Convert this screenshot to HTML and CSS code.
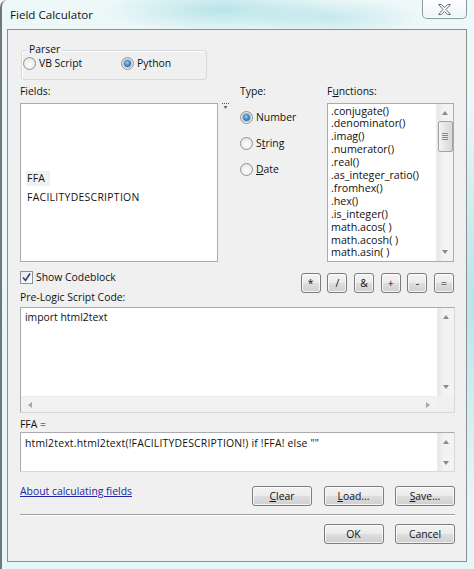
FILE: index.html
```html
<!DOCTYPE html>
<html>
<head>
<meta charset="utf-8">
<title>Field Calculator</title>
<link rel="stylesheet" href="styles.css">
</head>
<body>
<div class="window">
  <div class="titlebar">
    <div class="title">Field Calculator</div>
    <div class="close-btn">
      <svg width="13" height="11" viewBox="0 0 13 11"><path d="M0.5 0.5h3l3 3 3-3h3l-4.5 5 4.5 5h-3l-3-3-3 3h-3l4.5-5z" fill="#f6f6f6" stroke="#6f7577" stroke-width="1"/></svg>
    </div>
  </div>
  <div class="panel">
    <div class="group">
      <span class="group-label">Parser</span>
      <div class="radio radio-vb"><span class="rb"></span>VB Script</div>
      <div class="radio"><span class="rb checked"></span>Python</div>
    </div>

    <div class="columns">
      <div class="col">
        <div class="lbl">Fields:</div>
        <div class="listbox fields-list">
          <div class="field-item sel">FFA</div>
          <div class="field-item">FACILITYDESCRIPTION</div>
        </div>
      </div>
      <div class="sort-col">
        <svg width="7" height="7" viewBox="0 0 7 7"><path d="M0 0.5h1M2 0.5h1M4 0.5h1M6 0.5h1" stroke="#555" stroke-width="1"/><path d="M1.5 3h4l-2 3z" fill="#666"/></svg>
      </div>
      <div class="col">
        <div class="lbl">Type:</div>
        <div class="type-radios">
          <div class="radio"><span class="rb checked"></span>Number</div>
          <div class="radio"><span class="rb"></span>S<u>t</u>ring</div>
          <div class="radio"><span class="rb"></span><u>D</u>ate</div>
        </div>
      </div>
      <div class="col">
        <div class="lbl">F<u>u</u>nctions:</div>
        <div class="listbox func-list">
          <div class="func-items">
            <div>.conjugate()</div>
            <div>.denominator()</div>
            <div>.imag()</div>
            <div>.numerator()</div>
            <div>.real()</div>
            <div>.as_integer_ratio()</div>
            <div>.fromhex()</div>
            <div>.hex()</div>
            <div>.is_integer()</div>
            <div>math.acos( )</div>
            <div>math.acosh( )</div>
            <div>math.asin( )</div>
            <div class="partial">math.asinh( )</div>
          </div>
          <div class="vscroll">
            <span class="arrow up"></span>
            <span class="thumb"><span class="grip"></span></span>
            <span class="track-fill"></span>
            <span class="arrow down"></span>
          </div>
        </div>
      </div>
    </div>

    <div class="code-row">
      <div class="code-left">
        <div class="check">
          <span class="cb"><svg width="11" height="11" viewBox="0 0 11 11"><path d="M2 5.5l2.5 3 4.5-7" fill="none" stroke="#27408b" stroke-width="1.6"/></svg></span>
          Show Codeblock
        </div>
        <div class="lbl">Pre-Logic Script Code:</div>
      </div>
      <div class="ops">
        <div class="btn op">*</div>
        <div class="btn op">/</div>
        <div class="btn op">&amp;</div>
        <div class="btn op">+</div>
        <div class="btn op">-</div>
        <div class="btn op">=</div>
      </div>
    </div>

    <div class="textbox code-box">
      <div class="tb-text">import html2text</div>
      <div class="vscroll">
        <span class="arrow up"></span>
        <span class="track-fill"></span>
        <span class="arrow down"></span>
      </div>
      <div class="hscroll">
        <span class="arrow left"></span>
        <span class="track-fill"></span>
        <span class="arrow right"></span>
      </div>
      <div class="corner"></div>
    </div>

    <div class="lbl ffa-lbl">FFA =</div>
    <div class="textbox expr-box">
      <div class="tb-text">html2text.html2text(!FACILITYDESCRIPTION!) if !FFA! else ""</div>
      <div class="vscroll">
        <span class="arrow up"></span>
        <span class="track-fill"></span>
        <span class="arrow down"></span>
      </div>
    </div>

    <div class="action-row">
      <a class="link">About calculating fields</a>
      <div class="btn-group">
        <div class="btn"><u>C</u>lear</div>
        <div class="btn"><u>L</u>oad...</div>
        <div class="btn"><u>S</u>ave...</div>
      </div>
    </div>

    <div class="separator"></div>

    <div class="ok-row">
      <div class="btn">OK</div>
      <div class="btn">Cancel</div>
    </div>
  </div>
</div>
</body>
</html>
```
FILE: styles.css
```css
* { box-sizing: border-box; }

body {
  margin: 0;
  font-family: "Open Sans", "Noto Sans", sans-serif;
  font-size: 10.4px;
  color: #111;
}

.window {
  width: 474px;
  height: 569px;
  overflow: hidden;
  display: flex;
  flex-direction: column;
  border-left: 2px solid #6e7876;
  border-top-left-radius: 7px;
  background:
    radial-gradient(ellipse 120px 24px at 220px 10px, rgba(140, 212, 218, 0.55), rgba(140, 212, 218, 0) 100%),
    radial-gradient(ellipse 90px 20px at 330px 18px, rgba(160, 220, 226, 0.5), rgba(160, 220, 226, 0) 100%),
    radial-gradient(ellipse 40px 200px at 472px 300px, rgba(150, 215, 222, 0.6), rgba(150, 215, 222, 0) 100%),
    linear-gradient(#eef8f9, #e6f5f6);
}

.titlebar {
  height: 29px;
  display: flex;
  align-items: flex-start;
  justify-content: space-between;
  flex-shrink: 0;
}

.title {
  margin: 7px 0 0 8px;
  font-size: 11.6px;
  line-height: 16px;
  color: #111;
}

.close-btn {
  width: 45px;
  height: 19px;
  margin-right: 7px;
  border: 1px solid #8c9a9e;
  border-top: none;
  border-radius: 0 0 5px 5px;
  background: linear-gradient(rgba(255,255,255,0.85), rgba(236,244,246,0.7));
  box-shadow: inset 0 -1px 0 rgba(255,255,255,0.9);
  display: flex;
  align-items: center;
  justify-content: center;
}

.panel {
  margin-left: 5px;
  width: 460px;
  height: 533px;
  border: 1px solid #878f90;
  background: #f0f0f0;
  padding: 0 11px 0 12px;
  display: flex;
  flex-direction: column;
  flex-shrink: 0;
}

.lbl {
  line-height: 15px;
  white-space: nowrap;
}

/* Parser group */
.group {
  position: relative;
  margin: 20px 0 0 1px;
  width: 186px;
  height: 30px;
  border: 1px solid #d5dadf;
  border-radius: 3px;
  box-shadow: inset 1px 1px 0 #ffffff;
  display: flex;
  padding: 5px 0 0 1px;
}

.group-label {
  position: absolute;
  left: 5px;
  top: -9px;
  padding: 0 2px;
  line-height: 15px;
  background: #f0f0f0;
}

.radio {
  display: flex;
  align-items: center;
  height: 14px;
  line-height: 14px;
  white-space: nowrap;
}

.radio-vb { width: 98px; }

.rb {
  width: 13px;
  height: 13px;
  border-radius: 50%;
  border: 1px solid #929292;
  background: radial-gradient(circle at 50% 60%, #fdfdfd 0%, #eeeeee 55%, #d6d6d6 100%);
  margin-right: 3px;
  display: flex;
  align-items: center;
  justify-content: center;
  flex-shrink: 0;
}

.rb.checked::after {
  content: "";
  width: 7px;
  height: 7px;
  border-radius: 50%;
  background: radial-gradient(circle at 45% 40%, #9fd0f6 0%, #4a8fd2 40%, #1d5392 100%);
  box-shadow: 0 0 0 1px rgba(40, 80, 130, 0.35);
}

/* Columns */
.columns {
  margin-top: 4px;
  display: grid;
  grid-template-columns: 198px 22px 87px 127px;
}

.col .lbl { margin-bottom: 4px; }

.listbox {
  height: 159px;
  background: #fff;
  border: 1px solid #a9abae;
}

.fields-list {
  padding: 66px 0 0 6px;
}

.field-item {
  line-height: 18px;
  height: 18px;
  white-space: nowrap;
  letter-spacing: 0.3px;
}

.field-item.sel {
  display: inline-block;
  background: #f1f1f1;
  padding: 0 5px 0 1px;
  margin-left: -1px;
  line-height: 15px;
  height: 15px;
  margin-top: 1px;
  margin-bottom: 2px;
}

.sort-col {
  padding: 19px 0 0 4px;
  line-height: 0;
}

.type-radios {
  display: flex;
  flex-direction: column;
  gap: 12px;
  padding: 7px 0 0 0;
}

.func-list {
  display: flex;
  overflow: hidden;
}

.func-items {
  flex: 1;
  padding: 0.5px 0 0 3px;
  line-height: 12.9px;
  font-size: 10.7px;
  white-space: nowrap;
  overflow: hidden;
}

.func-items .partial {
  height: 3px;
  overflow: hidden;
}

.vscroll {
  width: 17px;
  flex-shrink: 0;
  background: linear-gradient(90deg, #e6e6e6, #f3f3f3 40%, #f3f3f3);
  border-left: 1px solid #ececec;
  display: flex;
  flex-direction: column;
  align-items: center;
}

.track-fill { flex: 1; }

.arrow {
  width: 0;
  height: 0;
  flex-shrink: 0;
}

.arrow.up {
  margin: 7px 0 4px;
  border-left: 3.5px solid transparent;
  border-right: 3.5px solid transparent;
  border-bottom: 4px solid #8a8a8a;
}

.arrow.down {
  margin: 4px 0 7px;
  border-left: 3.5px solid transparent;
  border-right: 3.5px solid transparent;
  border-top: 4px solid #8a8a8a;
}

.arrow.left {
  margin: 0 4px 0 7px;
  border-top: 3.5px solid transparent;
  border-bottom: 3.5px solid transparent;
  border-right: 4px solid #a8a8a8;
}

.arrow.right {
  margin: 0 7px 0 4px;
  border-top: 3.5px solid transparent;
  border-bottom: 3.5px solid transparent;
  border-left: 4px solid #a8a8a8;
}

.thumb {
  width: 15px;
  height: 31px;
  margin-top: 2px;
  border: 1px solid #a2a2a2;
  border-radius: 2px;
  background: linear-gradient(90deg, #f4f4f4, #e4e4e4 50%, #d8d8d8);
  display: flex;
  align-items: center;
  justify-content: center;
}

.grip {
  width: 6px;
  height: 7px;
  background: repeating-linear-gradient(#8a8a8a 0 1px, transparent 1px 2px);
}

/* Codeblock row */
.code-row {
  display: flex;
  justify-content: space-between;
}

.code-left {
  padding-top: 8px;
}

.check {
  display: flex;
  align-items: center;
  height: 14px;
  line-height: 14px;
  white-space: nowrap;
}

.cb {
  width: 13px;
  height: 13px;
  border: 1px solid #8e8f8f;
  background: linear-gradient(135deg, #e8e8e8, #ffffff);
  margin-right: 3px;
  display: flex;
  align-items: center;
  justify-content: center;
}

.code-left .lbl { margin-top: 6px; }

.ops {
  display: flex;
  gap: 6.67px;
  margin: 11px 1px 0 0;
}

.btn {
  height: 20px;
  border: 1px solid #7c7c7c;
  border-radius: 3px;
  background: linear-gradient(#f3f3f3 0%, #ebebeb 48%, #dddddd 52%, #d0d0d0 100%);
  box-shadow: inset 0 0 0 1px rgba(255,255,255,0.75);
  display: flex;
  align-items: center;
  justify-content: center;
  line-height: 14px;
  white-space: nowrap;
}

.btn.op {
  width: 20px;
  font-size: 10.4px;
}

/* Text boxes */
.textbox {
  background: #fff;
  border: 1px solid #a9abae;
  border-right-color: #d6d8dc;
  border-bottom-color: #d6d8dc;
  display: grid;
}

.code-box {
  margin-top: 2px;
  height: 106px;
  grid-template-columns: 1fr 17px;
  grid-template-rows: 1fr 16px;
}

.tb-text {
  padding: 2px 0 0 4px;
  line-height: 14px;
  white-space: nowrap;
  overflow: hidden;
}

.expr-box .tb-text { letter-spacing: 0.2px; }

.hscroll {
  background: linear-gradient(#f3f3f3, #f0f0f0);
  border-top: 1px solid #ececec;
  display: flex;
  align-items: center;
}

.corner { background: #f0f0f0; }

.ffa-lbl { margin-top: 4px; }

.expr-box {
  height: 40px;
  grid-template-columns: 1fr 17px;
}

.expr-box .tb-text { padding-top: 3px; }

.expr-box .arrow.up { margin-top: 7px; }
.expr-box .arrow.down { margin-bottom: 6px; }

/* Actions */
.action-row {
  margin-top: 14px;
  display: flex;
  justify-content: space-between;
  align-items: flex-start;
}

.link {
  color: #2323a6;
  text-decoration: underline;
  line-height: 15px;
  margin-top: -2px;
  white-space: nowrap;
}

.btn-group, .ok-row {
  display: flex;
  gap: 11.5px;
}

.btn-group .btn, .ok-row .btn { width: 60px; }

.separator {
  margin-top: 8px;
  height: 2px;
  border-top: 1px solid #a0a0a0;
  border-bottom: 1px solid #ffffff;
}

.ok-row {
  margin-top: 8px;
  justify-content: flex-end;
}
```
